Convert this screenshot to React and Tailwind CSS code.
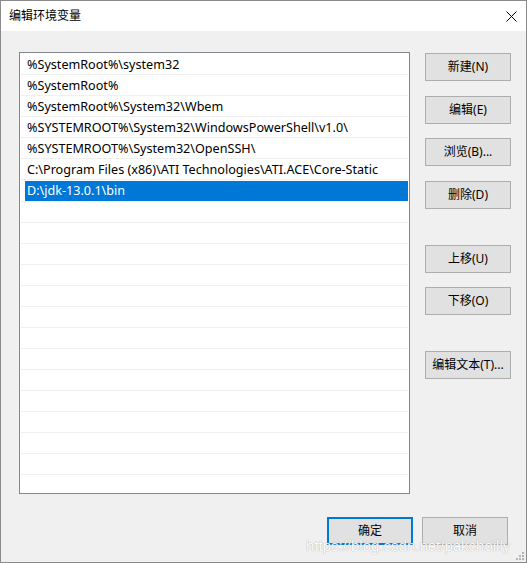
import React from 'react';

const paths = [
  '%SystemRoot%\\system32',
  '%SystemRoot%',
  '%SystemRoot%\\System32\\Wbem',
  '%SYSTEMROOT%\\System32\\WindowsPowerShell\\v1.0\\',
  '%SYSTEMROOT%\\System32\\OpenSSH\\',
  'C:\\Program Files (x86)\\ATI Technologies\\ATI.ACE\\Core-Static',
  'D:\\jdk-13.0.1\\bin',
];

const selectedIndex = 6;
const totalRows = 21;

// side buttons with the gap above each one
const sideButtons = [
  { label: '新建(N)', mt: 'mt-[1px]' },
  { label: '编辑(E)', mt: 'mt-[15px]' },
  { label: '浏览(B)...', mt: 'mt-[14px]' },
  { label: '删除(D)', mt: 'mt-[15px]' },
  { label: '上移(U)', mt: 'mt-[36px]' },
  { label: '下移(O)', mt: 'mt-[14px]' },
  { label: '编辑文本(T)...', mt: 'mt-[36px]' },
];

const uiFont = "[font-family:'Noto_Sans','Noto_Sans_CJK_SC',sans-serif]";

function WinButton({ label, className = '', primary = false }) {
  return (
    <button
      className={
        'flex h-[28px] w-[86px] items-center justify-center bg-[#e1e1e1] text-[12px] text-black ' +
        (primary ? 'border-2 border-[#0078d7] ' : 'border border-[#adadad] ') +
        className
      }
    >
      {label}
    </button>
  );
}

export default function App() {
  const rows = Array.from({ length: totalRows }, (_, i) => paths[i] ?? null);

  return (
    <div
      className={`relative flex h-[563px] w-[527px] flex-col overflow-hidden border border-[#8a8a8a] bg-[#f0f0f0] ${uiFont}`}
    >
      {/* Title bar */}
      <div className="flex h-[30px] shrink-0 items-center justify-between bg-white pl-[8px] pr-[9px]">
        <span className="text-[12px] text-black">编辑环境变量</span>
        <svg width="11" height="11" viewBox="0 0 11 11" className="mt-[1px]">
          <path d="M0.5 0.5L10.5 10.5M10.5 0.5L0.5 10.5" stroke="#000" strokeWidth="1" />
        </svg>
      </div>

      {/* Body */}
      <div className="flex pl-[18px] pt-[21px]">
        {/* Path list */}
        <div className="h-[442px] w-[391px] overflow-hidden border border-[#828790] bg-white pt-[1px]">
          {rows.map((text, i) => (
            <div key={i} className="mx-[1px] h-[21px] border-b border-[#f0f0f0]">
              {i === selectedIndex ? (
                <div className="ml-[4px] mt-[1px] flex h-[20px] items-center bg-[#0078d7] pl-[2px] pt-[1px] text-[12.6px] whitespace-nowrap text-white">
                  {text}
                </div>
              ) : (
                <div className="flex h-[20px] items-center whitespace-nowrap pl-[6px] pt-[2px] text-[12.6px] text-black">
                  {text}
                </div>
              )}
            </div>
          ))}
        </div>

        {/* Action buttons */}
        <div className="ml-[15px] flex flex-col">
          {sideButtons.map((b) => (
            <WinButton key={b.label} label={b.label} className={b.mt} />
          ))}
        </div>
      </div>

      {/* OK / Cancel */}
      <div className="mt-[23px] flex justify-end gap-[9px] pr-[18px]">
        <WinButton label="确定" primary />
        <WinButton label="取消" />
      </div>

      {/* watermark */}
      <div className="pointer-events-none absolute left-[305px] top-[536px] whitespace-nowrap [font-family:'Liberation_Sans',sans-serif] text-[15px] leading-[18px] text-white [text-shadow:0_0_1px_#8a8a8a] opacity-90">
        https://blog.csdn.net/pakchoilly
      </div>

      {/* resize grip */}
      <svg width="9" height="9" viewBox="0 0 9 9" className="absolute bottom-[1px] right-[1px]">
        <rect x="6" y="0" width="2" height="2" fill="#b5b5b5" />
        <rect x="3" y="3" width="2" height="2" fill="#b5b5b5" />
        <rect x="6" y="3" width="2" height="2" fill="#b5b5b5" />
        <rect x="0" y="6" width="2" height="2" fill="#b5b5b5" />
        <rect x="3" y="6" width="2" height="2" fill="#b5b5b5" />
        <rect x="6" y="6" width="2" height="2" fill="#b5b5b5" />
      </svg>
    </div>
  );
}
